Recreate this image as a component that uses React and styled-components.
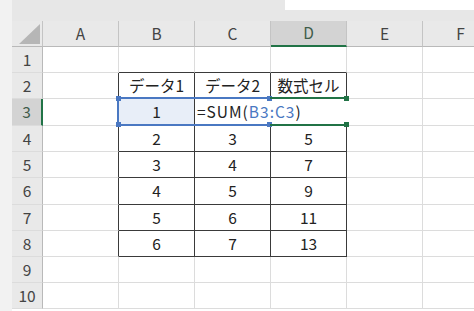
import React from 'react';
import styled, { createGlobalStyle, css } from 'styled-components';

const Global = createGlobalStyle`
  html, body { margin: 0; padding: 0; background: #ffffff; }
  body { font-family: "Noto Sans CJK JP", "Noto Sans", sans-serif; }
  * { box-sizing: border-box; }
`;

const COLS = ['A', 'B', 'C', 'D', 'E', 'F'];
const ROW_H = [26, 26, 27, 26, 26, 27, 26, 26, 26, 26];
const DATA = {
  2: ['', 'データ1', 'データ2', '数式セル'],
  3: ['', '1', '', ''],
  4: ['', '2', '3', '5'],
  5: ['', '3', '4', '7'],
  6: ['', '4', '5', '9'],
  7: ['', '5', '6', '11'],
  8: ['', '6', '7', '13'],
};
const ACTIVE_COL = 3;
const ACTIVE_ROW = 3;

const GRID = '#dcdcdc';
const HEAD_LINE = '#c4c4c4';
const TABLE = '#3a3a3a';
const GREEN = '#217346';
const BLUE = '#4a78c2';

const Window = styled.div`
  width: 474px;
  height: 311px;
  overflow: hidden;
  display: flex;
  background: #ffffff;
`;

const LeftStrip = styled.div`
  width: 12px;
  flex: none;
  background: #f2f2f2;
`;

const Main = styled.div`
  flex: 1;
  min-width: 0;
  display: flex;
  flex-direction: column;
`;

const TopBar = styled.div`
  height: 21px;
  flex: none;
  display: flex;
  justify-content: flex-end;
  align-items: flex-start;
  background: #e7e7e7;
`;

const Tab = styled.div`
  width: 189px;
  height: 10px;
  background: #ffffff;
`;

const Sheet = styled.div`
  display: grid;
  grid-template-columns: 31px repeat(6, 76px);
  grid-template-rows: 26px ${ROW_H.map((h) => `${h}px`).join(' ')};
  font-size: 15.5px;
  color: #222;
`;

const HeaderBase = css`
  display: flex;
  align-items: center;
  justify-content: center;
  line-height: 1;
  color: #444;
  background: #e9e9e9;
`;

const Corner = styled.div`
  ${HeaderBase};
  position: relative;
  border-right: 1px solid ${HEAD_LINE};
  border-bottom: 1px solid #b9b9b9;
`;

const Triangle = styled.span`
  position: absolute;
  right: 2px;
  bottom: 2px;
  width: 21px;
  height: 20px;
  background: #b6b6b6;
  clip-path: polygon(100% 0, 100% 100%, 0 100%);
`;

const ColHeader = styled.div`
  ${HeaderBase};
  font-size: 15.5px;
  border-right: 1px solid ${HEAD_LINE};
  border-bottom: 1px solid #b9b9b9;
  ${(p) =>
    p.$active &&
    css`
      background: #d3d3d3;
      color: #3f5c4a;
      border-bottom: 2px solid ${GREEN};
    `}
`;

const RowHeader = styled.div`
  ${HeaderBase};
  font-size: 15.5px;
  border-right: 1px solid #b9b9b9;
  border-bottom: 1px solid ${GRID};
  ${(p) =>
    p.$active &&
    css`
      background: #d3d3d3;
      color: #3f5c4a;
      border-right: 2px solid ${GREEN};
    `}
`;

const Cell = styled.div`
  position: relative;
  display: flex;
  align-items: center;
  justify-content: ${(p) => (p.$left ? 'flex-start' : 'center')};
  padding: ${(p) => (p.$left ? '0 0 0 2px' : '0')};
  line-height: 1;
  white-space: nowrap;
  overflow: visible;
  background: ${(p) => p.$bg || 'transparent'};
  border-right: 1px solid ${(p) => p.$rb};
  border-bottom: 1px solid ${(p) => p.$bb};
  z-index: ${(p) => (p.$over ? 2 : 'auto')};
`;

const RefFrame = styled.div`
  position: absolute;
  top: -2px;
  left: -2px;
  bottom: -1px;
  width: calc(200% + 2px);
  border-top: 2px solid ${BLUE};
  border-bottom: 2px solid ${BLUE};
  border-left: 2px solid ${BLUE};
  pointer-events: none;
  z-index: 3;
`;

const EditFrame = styled.div`
  position: absolute;
  top: -2px;
  left: -1px;
  bottom: -1px;
  right: 0;
  border-top: 2px solid ${GREEN};
  border-bottom: 2px solid ${GREEN};
  pointer-events: none;
  z-index: 3;
`;

const Handle = styled.span`
  position: absolute;
  width: 5px;
  height: 5px;
  background: ${(p) => p.$color};
  ${(p) => (p.$top ? 'top: -3px;' : 'bottom: -3px;')}
  ${(p) => (p.$right ? 'right: -3px;' : 'left: -3px;')}
`;

const Formula = styled.span`
  font-size: 15.5px;
  letter-spacing: 1px;
  color: #222;
`;

const RefText = styled.span`
  color: ${BLUE};
`;

function cellBorders(r, c) {
  const inRow = r >= 2 && r <= 8;
  let rb = inRow && c <= 3 ? TABLE : GRID;
  const bb = r >= 1 && r <= 8 && c >= 1 && c <= 3 ? TABLE : GRID;
  if (r === 3 && (c === 2 || c === 3)) rb = 'transparent';
  return { rb, bb };
}

function renderCell(r, c) {
  const { rb, bb } = cellBorders(r, c);
  const key = `${r}-${c}`;
  if (r === 3 && c === 1) {
    return (
      <Cell key={key} $rb={rb} $bb={bb} $bg="#e8eef8">
        1
        <RefFrame>
          <Handle $color={BLUE} $top />
          <Handle $color={BLUE} />
          <Handle $color={BLUE} $top $right />
          <Handle $color={BLUE} $right />
        </RefFrame>
      </Cell>
    );
  }
  if (r === 3 && c === 2) {
    return (
      <Cell key={key} $rb={rb} $bb={bb} $left $over>
        <Formula>
          =SUM(<RefText>B3:C3</RefText>)
        </Formula>
      </Cell>
    );
  }
  if (r === 3 && c === 3) {
    return (
      <Cell key={key} $rb={rb} $bb={bb}>
        <EditFrame>
          <Handle $color={GREEN} $top $right />
          <Handle $color={GREEN} $right />
        </EditFrame>
      </Cell>
    );
  }
  const row = DATA[r];
  const text = row && c <= 3 ? row[c] : '';
  return (
    <Cell key={key} $rb={rb} $bb={bb}>
      {text}
    </Cell>
  );
}

export default function App() {
  return (
    <>
      <Global />
      <Window>
        <LeftStrip />
        <Main>
          <TopBar>
            <Tab />
          </TopBar>
          <Sheet>
            <Corner>
              <Triangle />
            </Corner>
            {COLS.map((col, i) => (
              <ColHeader key={col} $active={i === ACTIVE_COL}>
                {col}
              </ColHeader>
            ))}
            {ROW_H.map((_, idx) => {
              const r = idx + 1;
              return (
                <React.Fragment key={r}>
                  <RowHeader $active={r === ACTIVE_ROW}>{r}</RowHeader>
                  {COLS.map((_, c) => renderCell(r, c))}
                </React.Fragment>
              );
            })}
          </Sheet>
        </Main>
      </Window>
    </>
  );
}
